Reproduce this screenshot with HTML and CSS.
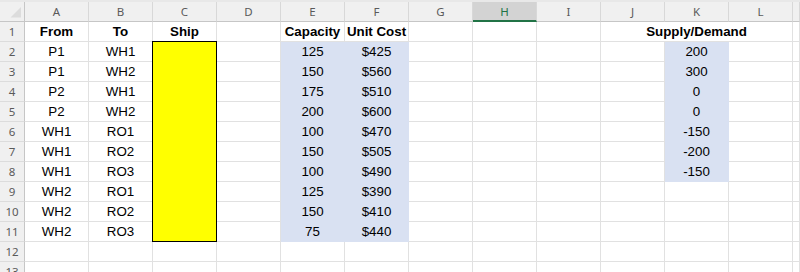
FILE: index.html
```html
<!DOCTYPE html>
<html>
<head>
    <meta charset="utf-8">
    <title>Transshipment</title>
    <link rel="stylesheet" href="styles.css">
</head>
<body>
    <div class="sheet" id="sheet">
        <div class="corner">
            <svg width="24" height="19" viewBox="0 0 24 19"><polygon points="21,5 21,15.5 10.5,15.5" fill="#dcdcdc"/></svg>
        </div>
        <div class="ship-box"></div>
        <div class="cell bold span-head">Supply/Demand</div>
    </div>
    <script>
        // sheet rows: From, To, (Ship), (D), Capacity, Unit Cost, ..., Supply/Demand
        // last column only peeks into the window, so it gets no letter
        const letters = ['A', 'B', 'C', 'D', 'E', 'F', 'G', 'H', 'I', 'J', 'K', 'L', ''];
        const rows = [
            ['P1', 'WH1', '125', '$425', '200'],
            ['P1', 'WH2', '150', '$560', '300'],
            ['P2', 'WH1', '175', '$510', '0'],
            ['P2', 'WH2', '200', '$600', '0'],
            ['WH1', 'RO1', '100', '$470', '-150'],
            ['WH1', 'RO2', '150', '$505', '-200'],
            ['WH1', 'RO3', '100', '$490', '-150'],
            ['WH2', 'RO1', '125', '$390', ''],
            ['WH2', 'RO2', '150', '$410', ''],
            ['WH2', 'RO3', '75', '$440', '']
        ];

        const sheet = document.getElementById('sheet');

        function addCell(text, cls) {
            const el = document.createElement('div');
            el.className = cls;
            el.textContent = text;
            sheet.appendChild(el);
        }

        letters.forEach(l => addCell(l, l === 'H' ? 'col-head active' : 'col-head'));

        for (let r = 1; r <= 13; r++) {
            addCell(r, 'row-head');
            letters.forEach(l => {
                let text = '';
                let cls = 'cell';
                if (r === 1) {
                    if (l === 'J' || l === 'K' || l === 'L') return;
                    text = {A: 'From', B: 'To', C: 'Ship', E: 'Capacity', F: 'Unit Cost'}[l] || '';
                    cls += ' bold';
                } else if (r <= 11) {
                    if (l === 'C') return;
                    const row = rows[r - 2];
                    if (l === 'A') text = row[0];
                    if (l === 'B') text = row[1];
                    if (l === 'E') { text = row[2]; cls += ' blue'; }
                    if (l === 'F') { text = row[3]; cls += ' blue'; }
                    if (l === 'K' && r <= 8) { text = row[4]; cls += ' blue'; }
                }
                addCell(text, cls);
            });
        }
    </script>
</body>
</html>
```

FILE: styles.css
```css
body {
    margin: 0;
    background-color: #fff;
    overflow: hidden;
}

.sheet {
    display: grid;
    grid-template-columns: 25px repeat(12, 64px) 7px;
    grid-auto-rows: 20px;
    border-top: 2px solid #e8e8e8;
    width: 800px;
}

.corner,
.col-head,
.row-head {
    background-color: #f0f0f0;
    color: #5a5a5a;
    font-family: "Noto Sans", "Open Sans", sans-serif;
    font-size: 11.5px;
    box-sizing: border-box;
}

.corner {
    border-right: 1px solid #c6c6c6;
    border-bottom: 1px solid #c6c6c6;
}

.corner svg {
    display: block;
}

.col-head {
    border-right: 1px solid #d8d8d8;
    border-bottom: 1px solid #c6c6c6;
    text-align: center;
    line-height: 20px;
}

.col-head.active {
    background-color: #d3d3d3;
    color: #217346;
    border-bottom: 2px solid #217346;
}

.row-head {
    border-right: 1px solid #c6c6c6;
    border-bottom: 1px solid #dcdcdc;
    text-align: center;
    line-height: 19px;
}

.cell {
    box-sizing: border-box;
    border-right: 1px solid #e1e1e1;
    border-bottom: 1px solid #e1e1e1;
    font-family: "Liberation Sans", Arial, sans-serif;
    font-size: 13.33px;
    line-height: 19px;
    color: #000;
    display: flex;
    justify-content: center;
    white-space: nowrap;
}

.bold {
    font-weight: bold;
}

.blue {
    background-color: #d9e1f2;
    border-color: #d9e1f2;
}

.ship-box {
    grid-column: 4;
    grid-row: 3 / span 10;
    margin: -1px 0 0 -1px;
    background-color: #ffff00;
    border: 1px solid #000;
    z-index: 1;
}

.span-head {
    grid-column: 11 / span 3;
    grid-row: 2;
}
```
